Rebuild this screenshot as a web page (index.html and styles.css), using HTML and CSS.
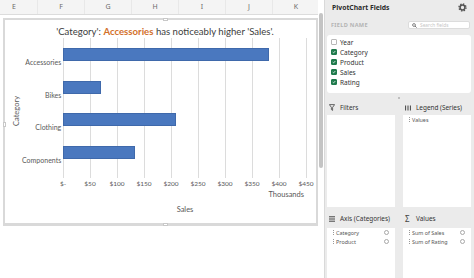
FILE: index.html
```html
<!DOCTYPE html>
<html lang="en">
<head>
    <meta charset="UTF-8">
    <meta name="viewport" content="width=device-width, initial-scale=1.0">
    <title>PivotChart</title>
    <link rel="stylesheet" href="styles.css">
</head>
<body>
    <div class="app">
        <div class="sheet">
            <div class="col-head">
                <span>E</span><span>F</span><span>G</span><span>H</span><span>I</span><span>J</span><span>K</span>
            </div>

            <div class="chart">
                <div class="chart-title">'Category': <b>Accessories</b> has noticeably higher 'Sales'.</div>
                <div class="chart-body">
                    <div class="y-title">Category</div>
                    <div class="cats">
                        <span>Accessories</span>
                        <span>Bikes</span>
                        <span>Clothing</span>
                        <span>Components</span>
                    </div>
                    <div class="plot">
                        <div class="band"><div class="bar" style="width: 84.5%"></div></div>
                        <div class="band"><div class="bar" style="width: 15.6%"></div></div>
                        <div class="band"><div class="bar" style="width: 46.3%"></div></div>
                        <div class="band"><div class="bar" style="width: 29.5%"></div></div>
                    </div>
                    <div class="x-labels">
                        <span>$-</span><span>$50</span><span>$100</span><span>$150</span><span>$200</span>
                        <span>$250</span><span>$300</span><span>$350</span><span>$400</span><span>$450</span>
                    </div>
                    <div class="units">Thousands</div>
                    <div class="x-title">Sales</div>
                </div>
                <i class="handle h-top"></i>
                <i class="handle h-bottom"></i>
                <i class="handle h-left"></i>
            </div>
        </div>

        <div class="vscroll"><div class="thumb"></div></div>

        <div class="pane">
            <div class="pane-top">
                <span class="pane-title">PivotChart Fields</span>
                <svg class="gear" width="9" height="9" viewBox="0 0 9 9">
                    <circle cx="4.5" cy="4.5" r="2.4" fill="none" stroke="#555" stroke-width="1.5"/>
                    <circle cx="4.5" cy="4.5" r="3.5" fill="none" stroke="#555" stroke-width="1.4" stroke-dasharray="1.4 1.35"/>
                </svg>
            </div>

            <div class="field-row">
                <span class="field-name">FIELD NAME</span>
                <div class="search">
                    <svg width="5" height="5" viewBox="0 0 5 5">
                        <circle cx="2" cy="2" r="1.4" fill="none" stroke="#666" stroke-width="0.8"/>
                        <path d="M3 3 L4.6 4.6" stroke="#666" stroke-width="0.9"/>
                    </svg>
                    <span>Search fields</span>
                </div>
            </div>

            <div class="field-list">
                <label class="field"><i class="box"></i>Year</label>
                <label class="field"><i class="box on"></i>Category</label>
                <label class="field"><i class="box on"></i>Product</label>
                <label class="field"><i class="box on"></i>Sales</label>
                <label class="field"><i class="box on"></i>Rating</label>
            </div>

            <div class="splitter"><i></i></div>

            <div class="areas">
                <div class="area-head">
                    <svg width="6" height="7" viewBox="0 0 6 7">
                        <path d="M0.4 0.6 H5.6 L3.6 3.4 V6.4 L2.4 5.6 V3.4 Z" fill="none" stroke="#444" stroke-width="0.8"/>
                    </svg>
                    <span>Filters</span>
                </div>
                <div class="area-head">
                    <svg width="6" height="6" viewBox="0 0 6 6">
                        <path d="M0.6 0.5 V5.5 M3 0.5 V5.5 M5.4 0.5 V5.5" stroke="#444" stroke-width="1"/>
                    </svg>
                    <span>Legend (Series)</span>
                </div>
                <div class="area-box"></div>
                <div class="area-box">
                    <div class="item"><i class="grip"></i>Values</div>
                </div>

                <div class="area-head low">
                    <svg width="6" height="6" viewBox="0 0 6 6">
                        <path d="M0 0.8 H6 M0 3 H6 M0 5.2 H6" stroke="#444" stroke-width="1"/>
                    </svg>
                    <span>Axis (Categories)</span>
                </div>
                <div class="area-head low">
                    <span class="sigma">Σ</span>
                    <span>Values</span>
                </div>
                <div class="area-box">
                    <div class="item"><i class="grip"></i>Category<i class="info"></i></div>
                    <div class="item"><i class="grip"></i>Product<i class="info"></i></div>
                </div>
                <div class="area-box">
                    <div class="item"><i class="grip"></i>Sum of Sales<i class="info"></i></div>
                    <div class="item"><i class="grip"></i>Sum of Rating<i class="info"></i></div>
                </div>
            </div>
        </div>
    </div>
</body>
</html>
```

FILE: styles.css
```css
* {
    box-sizing: border-box;
}

body {
    margin: 0;
    width: 474px;
    height: 278px;
    overflow: hidden;
    background-color: #fff;
    font-family: "Noto Sans", sans-serif;
}

.app {
    display: flex;
    height: 278px;
}

/* spreadsheet side */
.sheet {
    width: 318px;
    flex: none;
    overflow: hidden;
}

.col-head {
    display: flex;
    height: 15px;
    margin-left: -9px;
    background-color: #f4f4f4;
    border-bottom: 1px solid #dcdcdc;
}

.col-head span {
    flex: none;
    width: 47px;
    text-align: center;
    font-size: 7px;
    line-height: 14px;
    color: #6a6a6a;
    border-right: 1px solid #e8e8e8;
}

.chart {
    position: relative;
    width: 315px;
    height: 208px;
    margin: 3px 0 0 3px;
    border: 2px solid #d9d9d9;
    border-bottom-width: 3px;
    font-family: Lato, "Liberation Sans", sans-serif;
    color: #595959;
}

.chart-title {
    margin-top: 6px;
    height: 12px;
    padding-left: 9px;
    line-height: 12px;
    font-size: 9.6px;
    text-align: center;
    color: #404040;
}

.chart-title b {
    color: #d2702a;
}

.chart-body {
    display: grid;
    grid-template-columns: 17px 41px 244px;
    grid-template-rows: repeat(4, 32.5px) 10px 12px 10px 16px;
}

.y-title {
    grid-column: 1;
    grid-row: 1 / 6;
    justify-self: end;
    align-self: start;
    margin-top: 58px;
    writing-mode: vertical-rl;
    transform: rotate(180deg);
    font-size: 7.5px;
    line-height: 10px;
}

.cats {
    grid-column: 2;
    grid-row: 1 / 5;
    display: grid;
    grid-template-rows: repeat(4, 32.5px);
    justify-items: end;
    padding-right: 6px;
    font-size: 7px;
}

.cats span {
    padding-top: 19px;
    line-height: 10px;
    white-space: nowrap;
}

.plot {
    grid-column: 3;
    grid-row: 1 / 6;
    display: grid;
    grid-template-rows: repeat(4, 32.5px);
    align-content: start;
    background-image: repeating-linear-gradient(to right, #dcdcdc 0 1px, transparent 1px 27px);
}

.bar {
    height: 13px;
    margin-top: 10px;
    background-color: #4a78bf;
    border: 1px solid #3f69ab;
}

.x-labels {
    grid-column: 3;
    grid-row: 6;
    display: flex;
    margin-left: -13.5px;
    font-size: 6.5px;
    line-height: 12px;
}

.x-labels span {
    flex: none;
    width: 27px;
    text-align: center;
}

.units {
    grid-column: 3;
    grid-row: 7;
    text-align: right;
    padding-right: 3px;
    font-size: 7.5px;
    line-height: 10px;
}

.x-title {
    grid-column: 3;
    grid-row: 8;
    padding-top: 5px;
    text-align: center;
    font-size: 7.5px;
    line-height: 10px;
}

.handle {
    position: absolute;
    width: 5px;
    height: 3px;
    background-color: #fff;
    border: 1px solid #c8c8c8;
}

.h-top {
    top: -2px;
    left: 158px;
}

.h-bottom {
    bottom: -3px;
    left: 158px;
}

.h-left {
    left: -2px;
    top: 102px;
    width: 3px;
    height: 5px;
}

/* scrollbar */
.vscroll {
    width: 7px;
    flex: none;
    padding: 13px 0 0 1px;
    border-right: 1px solid #d9d9d9;
}

.thumb {
    width: 4px;
    height: 155px;
    border-radius: 2px;
    background-color: #c4c4c4;
}

/* field pane */
.pane {
    flex: 1;
    display: flex;
    flex-direction: column;
    padding: 0 3px 0 2px;
    background-color: #ebebeb;
    color: #333;
}

.pane-top {
    height: 15px;
    display: flex;
    align-items: center;
    justify-content: space-between;
    padding: 0 4px 0 5px;
}

.pane-title {
    font-size: 6.8px;
    font-weight: bold;
    color: #2b2b2b;
}

.gear {
    display: block;
}

.field-row {
    height: 20px;
    display: flex;
    align-items: center;
    justify-content: space-between;
    padding: 0 1px 0 4px;
}

.field-name {
    font-size: 5.6px;
    font-weight: bold;
    letter-spacing: 0.3px;
    color: #b4b4b4;
}

.search {
    width: 62px;
    height: 8px;
    display: flex;
    align-items: center;
    gap: 3px;
    padding-left: 3px;
    background-color: #fff;
    border: 1px solid #dcdcdc;
    border-radius: 2px;
}

.search svg {
    display: block;
}

.search span {
    font-size: 4.8px;
    color: #c6c6c6;
}

.field-list {
    height: 58px;
    padding: 2px 0 0 4px;
    background-color: #fff;
    border-radius: 3px;
}

.field {
    display: flex;
    align-items: center;
    gap: 3px;
    height: 10px;
    font-size: 6.5px;
    color: #333;
}

.box {
    width: 6px;
    height: 6px;
    border: 1px solid #b8b8b8;
    border-radius: 1px;
    background-color: #fff;
}

.box.on {
    border-color: #1f7a4c;
    background-color: #1f7a4c;
    background-image: url("data:image/svg+xml,%3Csvg xmlns='http://www.w3.org/2000/svg' viewBox='0 0 6 6'%3E%3Cpath d='M1 3.1 L2.4 4.4 L5 1.5' fill='none' stroke='white' stroke-width='1.1'/%3E%3C/svg%3E");
    background-size: 100% 100%;
}

.splitter {
    height: 10px;
    display: flex;
    align-items: center;
    justify-content: center;
}

.splitter i {
    width: 2px;
    height: 2px;
    border-radius: 1px;
    background-color: #b0b0b0;
}

.areas {
    flex: 1;
    display: grid;
    grid-template-columns: 68px 68px;
    grid-template-rows: 12px 92px 21px 1fr;
    column-gap: 8px;
}

.area-head {
    display: flex;
    align-items: flex-end;
    gap: 5px;
    padding: 0 0 2px 2px;
    font-size: 6.4px;
    line-height: 10px;
    color: #333;
}

.area-head svg {
    flex: none;
    margin-bottom: 2px;
}

.area-head.low {
    padding-bottom: 4px;
}

.sigma {
    width: 6px;
    font-size: 8px;
    line-height: 10px;
    color: #444;
}

.area-box {
    background-color: #fff;
}

.item {
    display: flex;
    align-items: center;
    gap: 2px;
    height: 9px;
    padding: 0 6px 0 6px;
    font-size: 5.4px;
    color: #555;
}

.grip {
    width: 1px;
    height: 5px;
    border-left: 1px dotted #999;
}

.info {
    width: 5px;
    height: 5px;
    margin-left: auto;
    border: 1px solid #a8a8a8;
    border-radius: 50%;
}
```
